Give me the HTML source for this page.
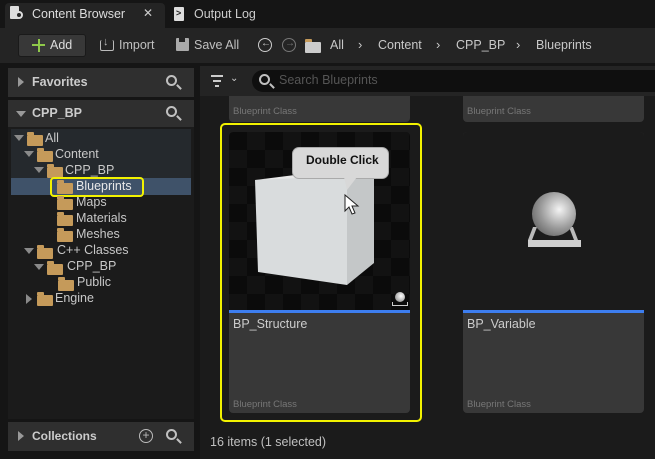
<!DOCTYPE html><html><head><style>
*{margin:0;padding:0;box-sizing:border-box}
body{width:655px;height:459px;background:#151515;font-family:"Liberation Sans",sans-serif;color:#c0c0c0;position:relative;overflow:hidden;font-size:12px}
.a{position:absolute}
.t{white-space:nowrap}
.fold{position:absolute;width:16px;height:11px;background:#c59a5a;border-radius:1px}
.fold:before{content:"";position:absolute;left:0;top:-3px;width:7px;height:3px;background:#c59a5a;border-radius:1px 1px 0 0}
.tri{position:absolute;width:0;height:0;border-left:5px solid transparent;border-right:5px solid transparent;border-top:6px solid #8a8a8a}
.trir{position:absolute;width:0;height:0;border-top:5px solid transparent;border-bottom:5px solid transparent;border-left:6px solid #8a8a8a}
.lbl{position:absolute;color:#c8c8c8;font-size:12.5px;white-space:nowrap}
.mag{position:absolute;width:11px;height:11px;border:2px solid #c0c0c0;border-radius:50%}
.mag:after{content:"";position:absolute;left:8px;top:9px;width:6px;height:2px;background:#c0c0c0;transform:rotate(45deg)}
.bc{color:#777;font-size:9.5px;position:absolute}
</style></head><body>
<div class="a" style="left:0;top:0;width:655px;height:28px;background:#151515"></div>
<div class="a" style="left:5px;top:3px;width:160px;height:26px;background:#242424;border-radius:4px 4px 0 0"></div>
<div class="a" style="left:10px;top:6px;width:9px;height:13px;background:#ddd;border-radius:1px"></div>
<div class="a" style="left:15px;top:11px;width:8px;height:8px;border:2px solid #ddd;border-radius:50%;background:#242424"></div>
<div class="a t" style="left:32px;top:7px;color:#ddd;font-size:12.5px">Content Browser</div>
<div class="a t" style="left:143px;top:6px;color:#ccc;font-size:12px">✕</div>
<div class="a" style="left:174px;top:7px;width:10px;height:14px;background:#ddd;border-radius:1px"></div>
<div class="a t" style="left:176px;top:8px;color:#222;font-size:9px;font-weight:bold">&gt;</div>
<div class="a t" style="left:194px;top:7px;color:#ccc;font-size:12.5px">Output Log</div>
<div class="a" style="left:0;top:28px;width:655px;height:35px;background:#242424"></div>
<div class="a" style="left:18px;top:34px;width:68px;height:23px;background:#383838;border:1px solid #1a1a1a;border-radius:3px"></div>
<div class="a" style="left:32px;top:44px;width:13px;height:2px;background:#8fc94a"></div>
<div class="a" style="left:37.5px;top:39px;width:2px;height:13px;background:#8fc94a"></div>
<div class="a t" style="left:50px;top:38px;color:#ddd;font-size:12.5px">Add</div>
<div class="a" style="left:100px;top:40px;width:14px;height:11px;border:1.5px solid #bbb;border-top:none;border-radius:2px"></div>
<div class="a t" style="left:103px;top:36px;color:#bbb;font-size:11px">↓</div>
<div class="a t" style="left:119px;top:38px;color:#c0c0c0;font-size:12.5px">Import</div>
<div class="a" style="left:176px;top:38px;width:13px;height:13px;background:#aaa;border-radius:1px"></div>
<div class="a" style="left:179px;top:38px;width:6px;height:4px;background:#242424"></div>
<div class="a t" style="left:194px;top:38px;color:#c0c0c0;font-size:12.5px">Save All</div>
<div class="a" style="left:258px;top:38px;width:14px;height:14px;border:1.5px solid #ccc;border-radius:50%"></div>
<div class="a t" style="left:261px;top:38px;color:#ccc;font-size:10px">←</div>
<div class="a" style="left:282px;top:38px;width:14px;height:14px;border:1.5px solid #777;border-radius:50%"></div>
<div class="a t" style="left:285px;top:38px;color:#777;font-size:10px">→</div>
<div class="fold" style="left:305px;top:42px;width:16px;background:#ccc"></div>
<div class="a t" style="left:330px;top:38px;color:#c8c8c8;font-size:12.5px">All</div>
<div class="a t" style="left:358px;top:37px;color:#c8c8c8;font-size:13px">›</div>
<div class="a t" style="left:378px;top:38px;color:#c8c8c8;font-size:12.5px">Content</div>
<div class="a t" style="left:436px;top:37px;color:#c8c8c8;font-size:13px">›</div>
<div class="a t" style="left:456px;top:38px;color:#c8c8c8;font-size:12.5px">CPP_BP</div>
<div class="a t" style="left:516px;top:37px;color:#c8c8c8;font-size:13px">›</div>
<div class="a t" style="left:536px;top:38px;color:#c8c8c8;font-size:12.5px">Blueprints</div>
<div class="a" style="left:8px;top:68px;width:186px;height:29px;background:#2f2f2f"></div>
<div class="trir" style="left:18px;top:77px;border-left-color:#999"></div>
<div class="a t" style="left:32px;top:75px;color:#ccc;font-size:12.5px;font-weight:bold">Favorites</div>
<div class="mag" style="left:166px;top:75px"></div>
<div class="a" style="left:8px;top:100px;width:186px;height:27px;background:#2f2f2f"></div>
<div class="tri" style="left:16px;top:111px;border-top-color:#999"></div>
<div class="a t" style="left:32px;top:106px;color:#ccc;font-size:12.5px;font-weight:bold">CPP_BP</div>
<div class="mag" style="left:166px;top:106px"></div>
<div class="a" style="left:8px;top:127px;width:186px;height:292px;background:#1b1b1b"></div>
<div class="a" style="left:11px;top:129px;width:180px;height:49px;background:#25292d"></div>
<div class="a" style="left:11px;top:178px;width:180px;height:17px;background:#3f5269"></div>
<div class="tri" style="left:14px;top:135px"></div><div class="fold" style="left:27px;top:135px"></div><div class="lbl" style="left:45px;top:131px">All</div>
<div class="tri" style="left:24px;top:151px"></div><div class="fold" style="left:37px;top:151px"></div><div class="lbl" style="left:55px;top:147px">Content</div>
<div class="tri" style="left:34px;top:167px"></div><div class="fold" style="left:47px;top:167px"></div><div class="lbl" style="left:65px;top:163px">CPP_BP</div>
<div class="fold" style="left:57px;top:183px"></div><div class="lbl" style="left:76px;top:179px;color:#e8e8e8">Blueprints</div>
<div class="a" style="left:50px;top:177px;width:94px;height:20px;border:2px solid #f2f200;border-radius:4px"></div>
<div class="fold" style="left:57px;top:199px"></div><div class="lbl" style="left:76px;top:195px">Maps</div>
<div class="fold" style="left:57px;top:215px"></div><div class="lbl" style="left:76px;top:211px">Materials</div>
<div class="fold" style="left:57px;top:231px"></div><div class="lbl" style="left:76px;top:227px">Meshes</div>
<div class="tri" style="left:24px;top:248px"></div><div class="fold" style="left:37px;top:248px"></div><div class="lbl" style="left:57px;top:243px">C++ Classes</div>
<div class="tri" style="left:34px;top:264px"></div><div class="fold" style="left:47px;top:264px"></div><div class="lbl" style="left:67px;top:259px">CPP_BP</div>
<div class="fold" style="left:58px;top:280px"></div><div class="lbl" style="left:77px;top:275px">Public</div>
<div class="trir" style="left:26px;top:294px"></div><div class="fold" style="left:37px;top:295px"></div><div class="lbl" style="left:55px;top:291px">Engine</div>
<div class="a" style="left:8px;top:422px;width:186px;height:29px;background:#2f2f2f"></div>
<div class="trir" style="left:18px;top:431px;border-left-color:#999"></div>
<div class="a t" style="left:32px;top:429px;color:#ccc;font-size:12px;font-weight:bold">Collections</div>
<div class="a" style="left:139px;top:429px;width:14px;height:14px;border:1.5px solid #bbb;border-radius:50%;color:#bbb;font-size:12px;line-height:11px;text-align:center">+</div>
<div class="mag" style="left:166px;top:429px"></div>
<div class="a" style="left:200px;top:66px;width:455px;height:393px;background:#1b1b1b"></div>
<div class="a" style="left:200px;top:66px;width:455px;height:30px;background:#242424"></div>
<div class="a" style="left:211px;top:75px;width:12px;height:2px;background:#ccc"></div>
<div class="a" style="left:213px;top:80px;width:8px;height:2px;background:#ccc"></div>
<div class="a" style="left:215px;top:85px;width:4px;height:2px;background:#ccc"></div>
<div class="a t" style="left:230px;top:73px;color:#ccc;font-size:10px">⌄</div>
<div class="a" style="left:252px;top:70px;width:403px;height:22px;background:#0f0f0f;border-radius:11px 0 0 11px"></div>
<div class="mag" style="left:259px;top:74px"></div>
<div class="a t" style="left:279px;top:73px;color:#555;font-size:12.5px">Search Blueprints</div>
<div class="a" style="left:229px;top:96px;width:181px;height:26px;background:#383838;border-radius:0 0 4px 4px"></div>
<div class="bc" style="left:233px;top:106px">Blueprint Class</div>
<div class="a" style="left:463px;top:96px;width:181px;height:26px;background:#383838;border-radius:0 0 4px 4px"></div>
<div class="bc" style="left:467px;top:106px">Blueprint Class</div>
<div class="a" style="left:220px;top:123px;width:202px;height:299px;border:2px solid #f2f200;border-radius:5px"></div>
<div class="a" style="left:229px;top:132px;width:181px;height:281px;background:#383838;border-radius:4px;overflow:hidden">
<div class="a" style="left:0;top:0;width:181px;height:178px;background-color:#0b0b0b;background-image:linear-gradient(45deg,#121212 25%,transparent 25%,transparent 75%,#121212 75%),linear-gradient(45deg,#121212 25%,transparent 25%,transparent 75%,#121212 75%);background-size:36px 36px;background-position:0 0,18px 18px"></div>
<div class="a" style="left:0;top:178px;width:181px;height:3px;background:#3d7ef0"></div>
<svg class="a" style="left:0;top:0" width="181" height="178"><polygon points="26,48 90,40 145,42 118,46" fill="#e8e8e8"/><polygon points="26,48 118,44 118,153 29,140" fill="#d9dcdd"/><polygon points="118,44 145,44 145,131 118,153" fill="#c4c7c8"/></svg>
<div class="a" style="left:63px;top:15px;width:97px;height:32px;background:#d8d8d8;border-radius:7px;border:1px solid #aaa"></div>
<svg class="a" style="left:112px;top:45px" width="20" height="20"><polygon points="3,0 16,0 6,13" fill="#d8d8d8"/></svg>
<div class="a t" style="left:77px;top:21px;color:#111;font-size:12px;font-weight:bold">Double Click</div>
<svg class="a" style="left:114px;top:61px" width="20" height="24"><path d="M2 2 L2 18 L6 14 L9 21 L12 20 L9 13 L15 13 Z" fill="#fff" stroke="#222" stroke-width="1"/></svg>
<div class="a" style="left:166px;top:160px;width:10px;height:10px;border-radius:50%;background:radial-gradient(circle at 60% 40%,#fff,#777)"></div>
<div class="a" style="left:163px;top:170px;width:16px;height:4px;border:1px solid #ccc;border-top:none"></div>
<div class="a t" style="left:4px;top:185px;color:#ccc;font-size:12.5px">BP_Structure</div>
<div class="bc" style="left:4px;top:267px">Blueprint Class</div>
</div>
<div class="a" style="left:463px;top:132px;width:181px;height:281px;background:#383838;border-radius:4px;overflow:hidden">
<div class="a" style="left:0;top:0;width:181px;height:178px;background:#1b1b1b"></div>
<div class="a" style="left:0;top:178px;width:181px;height:3px;background:#3d7ef0"></div>
<svg class="a" style="left:60px;top:90px" width="60" height="30"><polygon points="10,5 14,5 9,18 5,18" fill="#bbb"/><polygon points="46,5 50,5 55,18 51,18" fill="#bbb"/><rect x="5" y="18" width="53" height="7" fill="#cfcfcf"/></svg>
<div class="a" style="left:69px;top:60px;width:44px;height:44px;border-radius:50%;background:radial-gradient(circle at 62% 40%,#f4f4f4,#999 50%,#4a4a4a)"></div>
<div class="a t" style="left:4px;top:185px;color:#ccc;font-size:12.5px">BP_Variable</div>
<div class="bc" style="left:4px;top:267px">Blueprint Class</div>
</div>
<div class="a t" style="left:210px;top:435px;color:#c0c0c0;font-size:12.5px">16 items (1 selected)</div>
</body></html>
